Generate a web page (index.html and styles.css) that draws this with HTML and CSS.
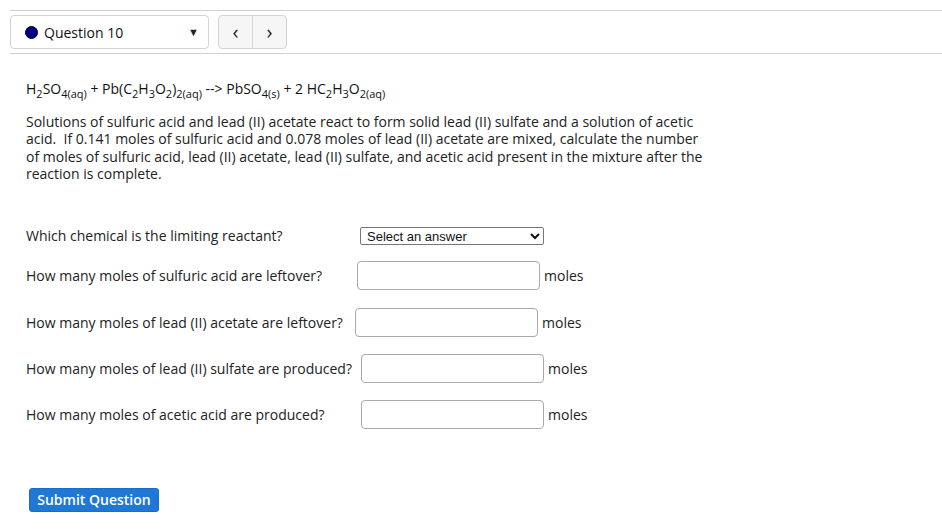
FILE: index.html
```html
<!DOCTYPE html>
<html>
<head>
<meta charset="utf-8">
<link rel="stylesheet" href="styles.css">
</head>
<body>
<div class="topbar">
  <div class="qselect">
    <span class="dot"></span>
    <span class="qlabel">Question 10</span>
    <span class="caret">&#9660;</span>
  </div>
  <div class="navbtns">
    <span class="nb">&lsaquo;</span>
    <span class="nb">&rsaquo;</span>
  </div>
</div>
<div class="question">
  <p class="eq">H<sub>2</sub>SO<sub>4(aq)</sub> + Pb(C<sub>2</sub>H<sub>3</sub>O<sub>2</sub>)<sub>2(aq)</sub> --&gt; PbSO<sub>4(s)</sub> + 2 HC<sub>2</sub>H<sub>3</sub>O<sub>2(aq)</sub></p>
  <p class="text">Solutions of sulfuric acid and lead (II) acetate react to form solid lead (II) sulfate and a solution of acetic acid.&nbsp; If 0.141 moles of sulfuric acid and 0.078 moles of lead (II) acetate are mixed, calculate the number of moles of sulfuric acid, lead (II) acetate, lead (II) sulfate, and acetic acid present in the mixture after the reaction is complete.</p>

  <div class="row r0">
    <span class="lbl">Which chemical is the limiting reactant?</span>
    <select class="sel"><option>Select an answer</option></select>
  </div>
  <div class="row r1">
    <span class="lbl">How many moles of sulfuric acid are leftover?</span>
    <input class="inp" type="text"><span class="unit">moles</span>
  </div>
  <div class="row r2">
    <span class="lbl">How many moles of lead (II) acetate are leftover?</span>
    <input class="inp" type="text"><span class="unit">moles</span>
  </div>
  <div class="row r3">
    <span class="lbl">How many moles of lead (II) sulfate are produced?</span>
    <input class="inp" type="text"><span class="unit">moles</span>
  </div>
  <div class="row r4">
    <span class="lbl">How many moles of acetic acid are produced?</span>
    <input class="inp" type="text"><span class="unit">moles</span>
  </div>

  <button class="submit">Submit Question</button>
</div>
</body>
</html>
```
FILE: styles.css
```css
html, body {
  margin: 0;
  padding: 0;
  background: #fff;
}
body {
  font-family: "Open Sans", "Noto Sans", sans-serif;
  font-size: 14px;
  line-height: 18px;
  color: #222;
  width: 942px;
  height: 530px;
  overflow: hidden;
}
.topbar {
  margin: 10px 0 0 10px;
  border-top: 1px solid #d0d0d0;
  border-bottom: 1px solid #d0d0d0;
  padding: 4px 0 4px 0;
  display: flex;
  align-items: center;
  gap: 9px;
}
.qselect {
  width: 197px;
  height: 32px;
  border: 1px solid #d4d4d4;
  border-radius: 4px;
  display: flex;
  align-items: center;
  box-sizing: content-box;
}
.dot {
  width: 11px;
  height: 11px;
  border-radius: 50%;
  background: #00008b;
  border: 1px solid #000;
  margin-left: 14px;
}
.qlabel {
  margin-left: 6px;
  margin-top: 2px;
  font-size: 14px;
  color: #111;
  flex: 1;
}
.caret {
  font-size: 11px;
  margin-right: 9px;
  color: #222;
}
.navbtns {
  display: flex;
  height: 32px;
  border: 1px solid #d4d4d4;
  border-radius: 4px;
  background: #f6f6f6;
  overflow: hidden;
}
.nb {
  width: 33px;
  display: flex;
  align-items: center;
  justify-content: center;
  font-size: 20px;
  color: #222;
}
.nb + .nb {
  border-left: 1px solid #d4d4d4;
}
.question {
  padding-left: 26px;
}
.eq {
  margin: 25px 0 0 0;
  font-size: 14px;
  line-height: 20px;
  color: #111;
}
.eq sub {
  font-size: 11px;
  vertical-align: -4px;
  line-height: 0;
}
.text {
  margin: 14px 0 0 0;
  width: 684px;
  line-height: 17.3px;
  font-size: 14px;
  color: #222;
}
.row {
  display: flex;
  align-items: center;
}
.lbl {
  flex: none;
}
.r0 { margin-top: 45px; height: 18px; }
.r0 .lbl { width: 334px; }
.r1 { margin-top: 16px; }
.r1 .lbl { width: 331px; }
.r2 { margin-top: 18px; }
.r2 .lbl { width: 329px; }
.r3 { margin-top: 17px; }
.r3 .lbl { width: 335px; }
.r4 { margin-top: 17px; }
.r4 .lbl { width: 335px; }
.sel {
  width: 184px;
  height: 18px;
  font-family: "Liberation Sans", Arial, sans-serif;
  font-size: 13px;
  border: 1px solid #767676;
  border-radius: 2px;
  background: #fff;
  color: #111;
  padding: 0 2px;
}
.inp {
  width: 183px;
  height: 29px;
  box-sizing: border-box;
  border: 1px solid #a9a9a9;
  border-radius: 4px;
  margin: 0;
}
.unit {
  margin-left: 4px;
}
.submit {
  margin: 59px 0 0 3px;
  width: 130px;
  height: 24px;
  background: #1f77d6;
  color: #fff;
  border: 1px solid #1a6cc4;
  border-radius: 3px;
  font-family: "Open Sans", sans-serif;
  font-size: 14px;
  font-weight: 600;
  line-height: 20px;
  padding: 0;
}
```
